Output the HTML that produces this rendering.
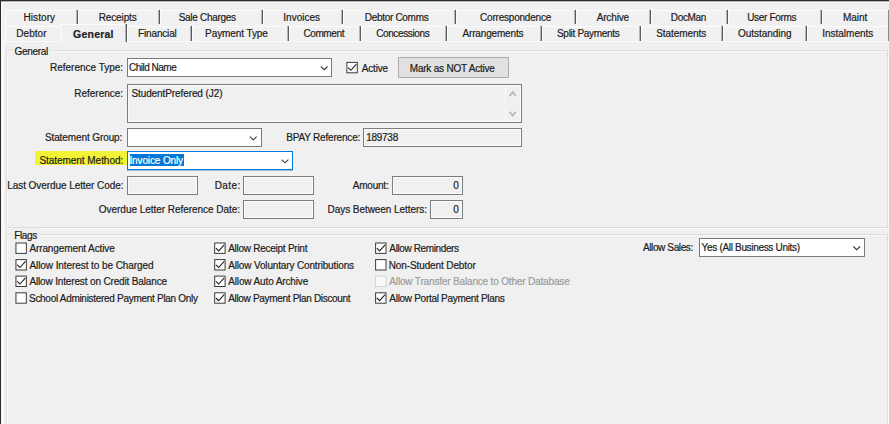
<!DOCTYPE html>
<html><head><meta charset="utf-8"><title>Debtor - General</title>
<style>
html,body{margin:0;padding:0;}
body{width:889px;height:424px;overflow:hidden;background:#f0f0f0;position:relative;font-family:"Liberation Sans",sans-serif;font-size:10px;color:#1c1c1c;}
.a{position:absolute;white-space:nowrap;}
.t{position:absolute;white-space:nowrap;line-height:12px;height:12px;-webkit-text-stroke:0.2px;}
.b{font-weight:bold;}
.tab{position:absolute;border:1px solid #fcfcfc;border-bottom:none;border-right:none;background:#f1f1f1;box-sizing:border-box;}
.sep{position:absolute;width:2px;background:linear-gradient(90deg,#b4b4b4 0,#b4b4b4 1px,#5c5c5c 1px,#5c5c5c 2px);}
.grp{position:absolute;border:1px solid #dcdcdc;box-sizing:border-box;box-shadow:inset 1px 1px 0 #fafafa,1px 1px 0 #fafafa;}
.gl{position:absolute;background:#f0f0f0;height:12px;}
.fld{position:absolute;box-sizing:border-box;border:1px solid #7a7a7a;background:#fff;}
.ro{background:#f0f0f0;border-color:#7c7c7c;box-shadow:inset 0 0 0 1px #fbfbfb;}
.cb{position:absolute;width:12px;height:12px;box-sizing:border-box;border:1px solid #3c3c3c;background:#fff;}
svg{position:absolute;overflow:visible;}
</style></head><body>
<div class="a" style="left:0;top:0;width:889px;height:1px;background:#2d2d2d"></div>
<div class="a" style="left:0;top:1px;width:889px;height:1px;background:#b4b4b4"></div>
<div class="a" style="left:0;top:2px;width:889px;height:1px;background:#f8f8f8"></div>
<div class="a" style="left:0;top:0;width:1px;height:424px;background:#2d2d2d"></div>
<div class="a" style="left:1px;top:2px;width:1px;height:422px;background:#f4f4f4"></div>
<div class="a" style="left:2px;top:2px;width:1px;height:422px;background:#f8f8f8"></div>
<div class="tab" style="left:5px;top:10px;width:71px;height:15px"></div>
<div class="t" style="left:23.47px;top:12px;letter-spacing:0.09px;">History</div>
<div class="tab" style="left:78px;top:10px;width:80px;height:15px"></div>
<div class="t" style="left:98.67px;top:12px;letter-spacing:-0.118px;">Receipts</div>
<div class="tab" style="left:160px;top:10px;width:101px;height:15px"></div>
<div class="t" style="left:178.71px;top:12px;letter-spacing:-0.299px;">Sale Charges</div>
<div class="tab" style="left:263px;top:10px;width:78px;height:15px"></div>
<div class="t" style="left:283.32px;top:12px;letter-spacing:0.007px;">Invoices</div>
<div class="tab" style="left:343px;top:10px;width:111px;height:15px"></div>
<div class="t" style="left:364.87px;top:12px;letter-spacing:-0.313px;">Debtor Comms</div>
<div class="tab" style="left:456px;top:10px;width:118px;height:15px"></div>
<div class="t" style="left:480.05px;top:12px;letter-spacing:-0.207px;">Correspondence</div>
<div class="tab" style="left:576px;top:10px;width:73px;height:15px"></div>
<div class="t" style="left:596.65px;top:12px;letter-spacing:-0.141px;">Archive</div>
<div class="tab" style="left:651px;top:10px;width:75px;height:15px"></div>
<div class="t" style="left:670.77px;top:12px;letter-spacing:-0.316px;">DocMan</div>
<div class="tab" style="left:728px;top:10px;width:92px;height:15px"></div>
<div class="t" style="left:747.2px;top:12px;letter-spacing:-0.331px;">User Forms</div>
<div class="tab" style="left:822px;top:10px;width:66px;height:15px"></div>
<div class="t" style="left:843.07px;top:12px;letter-spacing:-0.074px;">Maint</div>
<div class="sep" style="left:76px;top:10px;height:14px"></div>
<div class="sep" style="left:158px;top:10px;height:14px"></div>
<div class="sep" style="left:261px;top:10px;height:14px"></div>
<div class="sep" style="left:341px;top:10px;height:14px"></div>
<div class="sep" style="left:454px;top:10px;height:14px"></div>
<div class="sep" style="left:574px;top:10px;height:14px"></div>
<div class="sep" style="left:649px;top:10px;height:14px"></div>
<div class="sep" style="left:726px;top:10px;height:14px"></div>
<div class="sep" style="left:820px;top:10px;height:14px"></div>
<div class="a" style="left:888px;top:10px;width:1px;height:31px;background:#8a8a8a;z-index:4"></div>
<div class="tab" style="left:5px;top:26px;width:56px;height:15px"></div>
<div class="t" style="left:16.27px;top:28px;letter-spacing:0.057px;">Debtor</div>
<div class="tab" style="left:61px;top:24px;width:64px;height:18px;background:#f0f0f0;z-index:3"></div>
<div class="t b" style="left:73.05px;top:28px;letter-spacing:0.232px;z-index:6;font-size:10.5px;">General</div>
<div class="tab" style="left:127px;top:26px;width:63px;height:15px"></div>
<div class="t" style="left:138.07px;top:28px;letter-spacing:-0.159px;">Financial</div>
<div class="tab" style="left:192px;top:26px;width:95px;height:15px"></div>
<div class="t" style="left:205.07px;top:28px;letter-spacing:-0.084px;">Payment Type</div>
<div class="tab" style="left:289px;top:26px;width:70px;height:15px"></div>
<div class="t" style="left:303.45px;top:28px;letter-spacing:-0.392px;">Comment</div>
<div class="tab" style="left:361px;top:26px;width:84px;height:15px"></div>
<div class="t" style="left:376.15px;top:28px;letter-spacing:-0.372px;">Concessions</div>
<div class="tab" style="left:447px;top:26px;width:93px;height:15px"></div>
<div class="t" style="left:462.55px;top:28px;letter-spacing:-0.17px;">Arrangements</div>
<div class="tab" style="left:542px;top:26px;width:97px;height:15px"></div>
<div class="t" style="left:557.01px;top:28px;letter-spacing:-0.303px;">Split Payments</div>
<div class="tab" style="left:641px;top:26px;width:80px;height:15px"></div>
<div class="t" style="left:656.21px;top:28px;letter-spacing:-0.054px;">Statements</div>
<div class="tab" style="left:723px;top:26px;width:82px;height:15px"></div>
<div class="t" style="left:738.0px;top:28px;letter-spacing:-0.046px;">Outstanding</div>
<div class="tab" style="left:807px;top:26px;width:81px;height:15px"></div>
<div class="t" style="left:822.22px;top:28px;letter-spacing:-0.01px;">Instalments</div>
<div class="sep" style="left:125px;top:24px;height:18px;z-index:4"></div>
<div class="sep" style="left:190px;top:26px;height:15px;z-index:4"></div>
<div class="sep" style="left:287px;top:26px;height:15px;z-index:4"></div>
<div class="sep" style="left:359px;top:26px;height:15px;z-index:4"></div>
<div class="sep" style="left:445px;top:26px;height:15px;z-index:4"></div>
<div class="sep" style="left:540px;top:26px;height:15px;z-index:4"></div>
<div class="sep" style="left:639px;top:26px;height:15px;z-index:4"></div>
<div class="sep" style="left:721px;top:26px;height:15px;z-index:4"></div>
<div class="sep" style="left:805px;top:26px;height:15px;z-index:4"></div>
<div class="a" style="left:3px;top:41px;width:886px;height:384px;border:1px solid #fbfbfb;border-right:none;box-sizing:border-box;background:#f0f0f0;z-index:2"></div>
<div style="position:absolute;left:0;top:0;width:889px;height:424px;z-index:5">
<div class="grp" style="left:6px;top:50px;width:882px;height:178px"></div>
<div class="gl" style="left:13px;top:45px;width:37px"></div>
<div class="t" style="left:14.55px;top:46px;letter-spacing:-0.318px;">General</div>
<div class="t" style="left:50.02px;top:62px;letter-spacing:-0.006px;">Reference Type:</div>
<div class="fld" style="left:127px;top:58px;width:205px;height:19px;border-color:#7a7a7a"></div>
<svg width="9" height="6" viewBox="0 0 9 6" style="left:320px;top:66px"><path transform="translate(0.5 0.0)" d="M0.4 0.5 L3.75 3.75 L7.1 0.5" fill="none" stroke="#3a3a3a" stroke-width="1.05"/></svg>
<div class="t" style="left:129.05px;top:62px;letter-spacing:-0.505px;">Child Name</div>
<svg width="13" height="13" viewBox="0 0 13 13" style="left:346px;top:61px"><g transform="translate(0.4 0.9)"><rect x="0.5" y="0.5" width="10.4" height="10.4" fill="#fff" stroke="#3a3a3a" stroke-width="1"/><path d="M1.7 5.7 L4.5 8.4 L10.0 2.3" fill="none" stroke="#222" stroke-width="1.1"/></g></svg>
<div class="t" style="left:361.85px;top:63px;letter-spacing:-0.219px;">Active</div>
<div class="a" style="left:398px;top:57px;width:111px;height:21px;box-sizing:border-box;border:1px solid #adadad;background:#e1e1e1"></div>
<div class="t" style="left:409.77px;top:63px;letter-spacing:-0.21px;">Mark as NOT Active</div>
<div class="t" style="left:74.27px;top:88px;letter-spacing:-0.01px;">Reference:</div>
<div class="fld ro" style="left:127px;top:84px;width:395px;height:39px"></div>
<div class="a" style="left:505px;top:86px;width:1px;height:35px;background:#fbfbfb"></div>
<svg width="8" height="6" viewBox="0 0 8 6" style="left:509px;top:91px"><path d="M0.6 5.0 L3.7 1.2 L6.8 5.0" fill="none" stroke="#b6b6b6" stroke-width="1.7"/></svg>
<svg width="8" height="6" viewBox="0 0 8 6" style="left:509px;top:111px"><path d="M0.6 0.8 L3.7 4.6 L6.8 0.8" fill="none" stroke="#b6b6b6" stroke-width="1.7"/></svg>
<div class="t" style="left:131.41px;top:88px;letter-spacing:-0.093px;">StudentPrefered (J2)</div>
<div class="t" style="left:44.91px;top:132px;letter-spacing:-0.099px;">Statement Group:</div>
<div class="fld" style="left:127px;top:128px;width:135px;height:19px;border-color:#7a7a7a"></div>
<svg width="9" height="6" viewBox="0 0 9 6" style="left:249px;top:136px"><path transform="translate(0.5 0.2)" d="M0.4 0.5 L3.75 3.75 L7.1 0.5" fill="none" stroke="#3a3a3a" stroke-width="1.05"/></svg>
<div class="t" style="left:286.27px;top:132px;letter-spacing:-0.193px;">BPAY Reference:</div>
<div class="fld ro" style="left:363px;top:128px;width:159px;height:19px"></div>
<div class="t" style="left:366.22px;top:132px;letter-spacing:-0.273px;">189738</div>
<div class="a" style="left:35px;top:151px;width:92px;height:14px;background:#f3f336"></div>
<div class="t" style="left:39.41px;top:155px;letter-spacing:-0.044px;">Statement Method:</div>
<div class="fld" style="left:127px;top:151px;width:166px;height:19px;border-color:#0078d7;box-shadow:0 1px 0 rgba(0,120,215,.4)"></div>
<svg width="9" height="6" viewBox="0 0 9 6" style="left:281px;top:159px"><path transform="translate(0.25 0.1)" d="M0.4 0.5 L3.75 3.75 L7.1 0.5" fill="none" stroke="#3a3a3a" stroke-width="1.05"/></svg>
<div class="a" style="left:130px;top:154px;width:54px;height:12px;background:#0078d7"></div>
<div class="t" style="left:129.42px;top:155px;letter-spacing:-0.119px;color:#fff;">Invoice Only</div>
<div class="t" style="left:7.27px;top:180px;letter-spacing:-0.071px;">Last Overdue Letter Code:</div>
<div class="fld ro" style="left:127px;top:176px;width:71px;height:19px"></div>
<div class="t" style="left:214.77px;top:180px;letter-spacing:0.387px;">Date:</div>
<div class="fld ro" style="left:243px;top:176px;width:71px;height:19px"></div>
<div class="t" style="left:352.85px;top:180px;letter-spacing:-0.235px;">Amount:</div>
<div class="fld ro" style="left:392px;top:176px;width:71px;height:19px"></div>
<div class="t" style="left:453.14px;top:180px;letter-spacing:0px;">0</div>
<div class="t" style="left:98.85px;top:204px;letter-spacing:-0.04px;">Overdue Letter Reference Date:</div>
<div class="fld ro" style="left:243px;top:200px;width:71px;height:19px"></div>
<div class="t" style="left:327.52px;top:204px;letter-spacing:-0.053px;">Days Between Letters:</div>
<div class="fld ro" style="left:430px;top:200px;width:33px;height:19px"></div>
<div class="t" style="left:453.14px;top:204px;letter-spacing:0px;">0</div>
<div class="grp" style="left:6px;top:234px;width:882px;height:200px"></div>
<div class="gl" style="left:13px;top:228px;width:26px"></div>
<div class="t" style="left:14.27px;top:230px;letter-spacing:-0.388px;">Flags</div>
<svg width="13" height="13" viewBox="0 0 13 13" style="left:15px;top:242px"><g transform="translate(0.45 0.5)"><rect x="0.5" y="0.5" width="10.4" height="10.4" fill="#fff" stroke="#3a3a3a" stroke-width="1"/></g></svg>
<div class="t" style="left:29.45px;top:243px;letter-spacing:-0.114px;">Arrangement Active</div>
<svg width="13" height="13" viewBox="0 0 13 13" style="left:15px;top:259px"><g transform="translate(0.45 0.1)"><rect x="0.5" y="0.5" width="10.4" height="10.4" fill="#fff" stroke="#3a3a3a" stroke-width="1"/><path d="M1.7 5.7 L4.5 8.4 L10.0 2.3" fill="none" stroke="#222" stroke-width="1.1"/></g></svg>
<div class="t" style="left:29.45px;top:260px;letter-spacing:-0.076px;">Allow Interest to be Charged</div>
<svg width="13" height="13" viewBox="0 0 13 13" style="left:15px;top:275px"><g transform="translate(0.45 0.6)"><rect x="0.5" y="0.5" width="10.4" height="10.4" fill="#fff" stroke="#3a3a3a" stroke-width="1"/><path d="M1.7 5.7 L4.5 8.4 L10.0 2.3" fill="none" stroke="#222" stroke-width="1.1"/></g></svg>
<div class="t" style="left:29.45px;top:276px;letter-spacing:-0.151px;">Allow Interest on Credit Balance</div>
<svg width="13" height="13" viewBox="0 0 13 13" style="left:15px;top:292px"><g transform="translate(0.45 0.3)"><rect x="0.5" y="0.5" width="10.4" height="10.4" fill="#fff" stroke="#3a3a3a" stroke-width="1"/></g></svg>
<div class="t" style="left:29.01px;top:293px;letter-spacing:-0.292px;">School Administered Payment Plan Only</div>
<svg width="13" height="13" viewBox="0 0 13 13" style="left:214px;top:242px"><g transform="translate(0.2 0.5)"><rect x="0.5" y="0.5" width="10.4" height="10.4" fill="#fff" stroke="#3a3a3a" stroke-width="1"/><path d="M1.7 5.7 L4.5 8.4 L10.0 2.3" fill="none" stroke="#222" stroke-width="1.1"/></g></svg>
<div class="t" style="left:228.15px;top:243px;letter-spacing:-0.256px;">Allow Receipt Print</div>
<svg width="13" height="13" viewBox="0 0 13 13" style="left:214px;top:259px"><g transform="translate(0.2 0.1)"><rect x="0.5" y="0.5" width="10.4" height="10.4" fill="#fff" stroke="#3a3a3a" stroke-width="1"/><path d="M1.7 5.7 L4.5 8.4 L10.0 2.3" fill="none" stroke="#222" stroke-width="1.1"/></g></svg>
<div class="t" style="left:228.15px;top:260px;letter-spacing:-0.148px;">Allow Voluntary Contributions</div>
<svg width="13" height="13" viewBox="0 0 13 13" style="left:214px;top:275px"><g transform="translate(0.2 0.6)"><rect x="0.5" y="0.5" width="10.4" height="10.4" fill="#fff" stroke="#3a3a3a" stroke-width="1"/><path d="M1.7 5.7 L4.5 8.4 L10.0 2.3" fill="none" stroke="#222" stroke-width="1.1"/></g></svg>
<div class="t" style="left:228.15px;top:276px;letter-spacing:-0.126px;">Allow Auto Archive</div>
<svg width="13" height="13" viewBox="0 0 13 13" style="left:214px;top:292px"><g transform="translate(0.2 0.3)"><rect x="0.5" y="0.5" width="10.4" height="10.4" fill="#fff" stroke="#3a3a3a" stroke-width="1"/><path d="M1.7 5.7 L4.5 8.4 L10.0 2.3" fill="none" stroke="#222" stroke-width="1.1"/></g></svg>
<div class="t" style="left:228.15px;top:293px;letter-spacing:-0.314px;">Allow Payment Plan Discount</div>
<svg width="13" height="13" viewBox="0 0 13 13" style="left:375px;top:242px"><g transform="translate(0.1 0.5)"><rect x="0.5" y="0.5" width="10.4" height="10.4" fill="#fff" stroke="#3a3a3a" stroke-width="1"/><path d="M1.7 5.7 L4.5 8.4 L10.0 2.3" fill="none" stroke="#222" stroke-width="1.1"/></g></svg>
<div class="t" style="left:389.35px;top:243px;letter-spacing:-0.382px;">Allow Reminders</div>
<svg width="13" height="13" viewBox="0 0 13 13" style="left:375px;top:259px"><g transform="translate(0.1 0.1)"><rect x="0.5" y="0.5" width="10.4" height="10.4" fill="#fff" stroke="#3a3a3a" stroke-width="1"/></g></svg>
<div class="t" style="left:388.77px;top:260px;letter-spacing:-0.117px;">Non-Student Debtor</div>
<svg width="13" height="13" viewBox="0 0 13 13" style="left:375px;top:275px"><g transform="translate(0.1 0.6)"><rect x="0.5" y="0.5" width="10.4" height="10.4" fill="#f8f8f8" stroke="#d4d4d4" stroke-width="1"/></g></svg>
<div class="t" style="left:389.35px;top:276px;letter-spacing:-0.164px;color:#9c9c9c;">Allow Transfer Balance to Other Database</div>
<svg width="13" height="13" viewBox="0 0 13 13" style="left:375px;top:292px"><g transform="translate(0.1 0.3)"><rect x="0.5" y="0.5" width="10.4" height="10.4" fill="#fff" stroke="#3a3a3a" stroke-width="1"/><path d="M1.7 5.7 L4.5 8.4 L10.0 2.3" fill="none" stroke="#222" stroke-width="1.1"/></g></svg>
<div class="t" style="left:389.35px;top:293px;letter-spacing:-0.295px;">Allow Portal Payment Plans</div>
<div class="t" style="left:642.95px;top:242px;letter-spacing:-0.377px;">Allow Sales:</div>
<div class="fld" style="left:699px;top:238px;width:166px;height:19px;border-color:#7a7a7a"></div>
<svg width="9" height="6" viewBox="0 0 9 6" style="left:852px;top:246px"><path transform="translate(0.9 0.0)" d="M0.4 0.5 L3.75 3.75 L7.1 0.5" fill="none" stroke="#3a3a3a" stroke-width="1.05"/></svg>
<div class="t" style="left:701.6px;top:242px;letter-spacing:-0.32px;">Yes (All Business Units)</div>
</div>
</body></html>
